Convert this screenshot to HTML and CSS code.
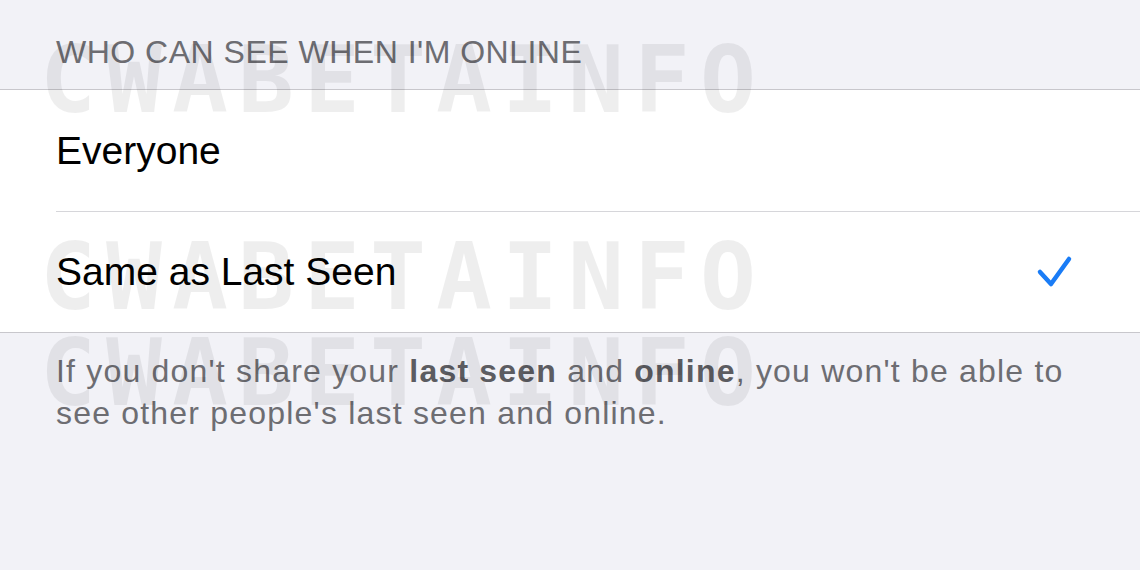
FILE: index.html
```
<!DOCTYPE html>
<html lang="en">
    <head>
        <meta charset="UTF-8">
        <meta name="viewport" content="width=device-width, initial-scale=1.0">
        <title>Online</title>
        <link rel="stylesheet" href="styles.css">
    </head>
    <body>
        <div class="screen">
            <div class="section-title">WHO CAN SEE WHEN I'M ONLINE</div>
            <div class="list">
                <div class="row">
                    <span class="label">Everyone</span>
                </div>
                <div class="row selected">
                    <span class="label">Same as Last Seen</span>
                    <svg class="check" width="40" height="36" viewBox="0 0 40 36">
                        <path d="M4 17 L15 29 L33 4" fill="none" stroke="#1a7cf6" stroke-width="4.5" stroke-linecap="round" stroke-linejoin="round"/>
                    </svg>
                </div>
            </div>
            <p class="note">If you don't share your <b>last seen</b> and <b>online</b>, you won't be able to see other people's last seen and online.</p>

            <div class="watermark">
                <span class="wm wm-1">CWABETAINFO</span>
                <span class="wm wm-2">CWABETAINFO</span>
                <span class="wm wm-3">CWABETAINFO</span>
            </div>
        </div>
    </body>
</html>
```

FILE: styles.css
```
*{
    margin: 0;
    padding: 0;
    box-sizing: border-box;
}
body{
    background-color: #f2f2f7;
    font-family: "Liberation Sans", Arial, sans-serif;
}
.screen{
    position: relative;
    width: 100vw;
    height: 100vh;
    overflow: hidden;
}
.section-title{
    padding: 32px 0 0 56px;
    height: 89px;
    font-size: 32px;
    line-height: 40px;
    letter-spacing: 0.5px;
    color: #6d6d72;
}
.list{
    background-color: #fff;
    border-top: 1px solid #c8c7cc;
    border-bottom: 1px solid #c8c7cc;
    padding-left: 56px;
}
.row{
    display: flex;
    align-items: center;
    justify-content: space-between;
    height: 121px;
    padding-right: 64px;
}
.row + .row{
    border-top: 1px solid #d6d6da;
}
.label{
    font-size: 39px;
    color: #000;
}
.check{
    display: block;
    margin-top: 2px;
}
.note{
    padding: 17px 56px 0 56px;
    font-size: 32px;
    line-height: 42px;
    letter-spacing: 1.2px;
    color: #6d6d72;
}
.note b{
    color: #5c5c61;
}
.watermark{
    position: absolute;
    inset: 0;
    pointer-events: none;
}
.wm{
    position: absolute;
    left: 40px;
    font-family: "DejaVu Sans Mono", monospace;
    font-weight: bold;
    font-size: 93px;
    line-height: 1;
    letter-spacing: 10px;
    color: rgba(0, 0, 0, 0.065);
}
.wm-1{ top: 34px; }
.wm-2{ top: 231px; }
.wm-3{ top: 327px; }
```
